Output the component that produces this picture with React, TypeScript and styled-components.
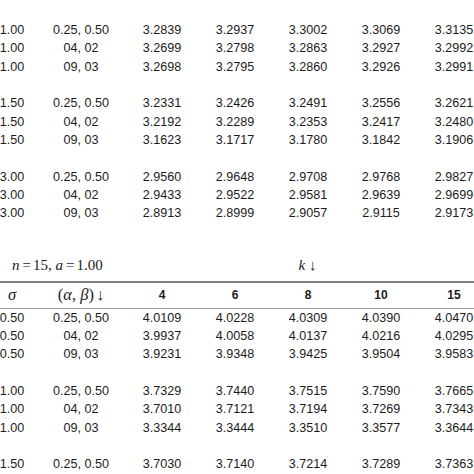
import styled, { createGlobalStyle } from "styled-components";

const GlobalStyle = createGlobalStyle`
  html, body {
    margin: 0;
    padding: 0;
    width: 474px;
    height: 474px;
    overflow: hidden;
    background: #ffffff;
  }
`;

const Page = styled.div`
  width: 474px;
  height: 474px;
  overflow: hidden;
  padding-top: 21px;
  box-sizing: border-box;
  color: #1b1b1b;
`;

const Table = styled.table`
  border-collapse: collapse;
  table-layout: fixed;
  width: 515.5px;
  margin-left: -25px;
  font-family: "Liberation Sans", Arial, sans-serif;
  font-size: 12.6px;

  col:nth-child(1) { width: 74px; }
  col:nth-child(2) { width: 64px; }
  col:nth-child(3) { width: 85.5px; }
  col:nth-child(n + 4) { width: 73px; }
`;

const Row = styled.tr`
  height: 18.35px;
`;

const Cell = styled.td<{ $shift?: boolean }>`
  padding: 0;
  padding-left: ${(p) => (p.$shift ? "12.5px" : "0")};
  text-align: center;
  white-space: nowrap;
  line-height: 18.35px;
  vertical-align: middle;
  overflow: visible;
`;

const CaptionRow = styled.tr`
  td {
    padding-top: 15px;
    padding-bottom: 7px;
  }
`;

const CaptionCell = styled.td<{ $center?: boolean }>`
  font-family: "Liberation Serif", "Times New Roman", serif;
  font-size: 15px;
  white-space: nowrap;
  text-align: ${(p) => (p.$center ? "center" : "left")};
  padding-left: ${(p) => (p.$center ? "0" : "37px")};
  line-height: 18px;
`;

const Eq = styled.span`
  margin: 0 2px 0 3px;
`;

const Var = styled.i`
  font-style: italic;
`;

const HeadRow = styled.tr`
  height: 26px;
  border-top: 2px solid #7e7e7e;
  border-bottom: 1.5px solid #9a9a9a;
`;

const HeadCell = styled.th<{ $serif?: boolean; $shift?: boolean }>`
  padding: 0;
  padding-left: ${(p) => (p.$shift ? "12.5px" : "0")};
  text-align: center;
  white-space: nowrap;
  font-family: ${(p) =>
    p.$serif
      ? `"Liberation Serif", "Times New Roman", serif`
      : `"Liberation Sans", Arial, sans-serif`};
  font-size: ${(p) => (p.$serif ? "16.5px" : "12px")};
  font-weight: ${(p) => (p.$serif ? 400 : 700)};
`;

const Arrow = styled.span`
  margin-left: 2px;
`;

type DataRow = [string, string, string[]] | null;

const upper: DataRow[] = [
  ["1.00", "0.25, 0.50", ["3.2839", "3.2937", "3.3002", "3.3069", "3.3135"]],
  ["1.00", "04, 02", ["3.2699", "3.2798", "3.2863", "3.2927", "3.2992"]],
  ["1.00", "09, 03", ["3.2698", "3.2795", "3.2860", "3.2926", "3.2991"]],
  null,
  ["1.50", "0.25, 0.50", ["3.2331", "3.2426", "3.2491", "3.2556", "3.2621"]],
  ["1.50", "04, 02", ["3.2192", "3.2289", "3.2353", "3.2417", "3.2480"]],
  ["1.50", "09, 03", ["3.1623", "3.1717", "3.1780", "3.1842", "3.1906"]],
  null,
  ["3.00", "0.25, 0.50", ["2.9560", "2.9648", "2.9708", "2.9768", "2.9827"]],
  ["3.00", "04, 02", ["2.9433", "2.9522", "2.9581", "2.9639", "2.9699"]],
  ["3.00", "09, 03", ["2.8913", "2.8999", "2.9057", "2.9115", "2.9173"]],
  null,
];

const lower: DataRow[] = [
  ["0.50", "0.25, 0.50", ["4.0109", "4.0228", "4.0309", "4.0390", "4.0470"]],
  ["0.50", "04, 02", ["3.9937", "4.0058", "4.0137", "4.0216", "4.0295"]],
  ["0.50", "09, 03", ["3.9231", "3.9348", "3.9425", "3.9504", "3.9583"]],
  null,
  ["1.00", "0.25, 0.50", ["3.7329", "3.7440", "3.7515", "3.7590", "3.7665"]],
  ["1.00", "04, 02", ["3.7010", "3.7121", "3.7194", "3.7269", "3.7343"]],
  ["1.00", "09, 03", ["3.3344", "3.3444", "3.3510", "3.3577", "3.3644"]],
  null,
  ["1.50", "0.25, 0.50", ["3.7030", "3.7140", "3.7214", "3.7289", "3.7363"]],
];

function Cols() {
  return (
    <colgroup>
      {Array.from({ length: 7 }).map((_, i) => (
        <col key={i} />
      ))}
    </colgroup>
  );
}

function Rows({ rows }: { rows: DataRow[] }) {
  return (
    <>
      {rows.map((r, i) =>
        r ? (
          <Row key={i}>
            <Cell>{r[0]}</Cell>
            <Cell>{r[1]}</Cell>
            {r[2].map((v, j) => (
              <Cell key={j} $shift={j === 0}>
                {v}
              </Cell>
            ))}
          </Row>
        ) : (
          <Row key={i}>
            <Cell colSpan={7} />
          </Row>
        )
      )}
    </>
  );
}

export default function App() {
  return (
    <>
      <GlobalStyle />
      <Page>
        <Table>
          <Cols />
          <tbody>
            <Rows rows={upper} />
          </tbody>
        </Table>
        <Table>
          <Cols />
          <thead>
            <CaptionRow>
              <CaptionCell colSpan={3}>
                <Var>n</Var>
                <Eq>=</Eq>15, <Var>a</Var>
                <Eq>=</Eq>1.00
              </CaptionCell>
              <CaptionCell colSpan={3} $center>
                <Var>k</Var> ↓
              </CaptionCell>
              <CaptionCell />
            </CaptionRow>
            <HeadRow>
              <HeadCell $serif>
                <Var>σ</Var>
              </HeadCell>
              <HeadCell $serif>
                (<Var>α</Var>, <Var>β</Var>)<Arrow>↓</Arrow>
              </HeadCell>
              <HeadCell $shift>4</HeadCell>
              <HeadCell>6</HeadCell>
              <HeadCell>8</HeadCell>
              <HeadCell>10</HeadCell>
              <HeadCell>15</HeadCell>
            </HeadRow>
          </thead>
          <tbody>
            <Rows rows={lower} />
          </tbody>
        </Table>
      </Page>
    </>
  );
}
